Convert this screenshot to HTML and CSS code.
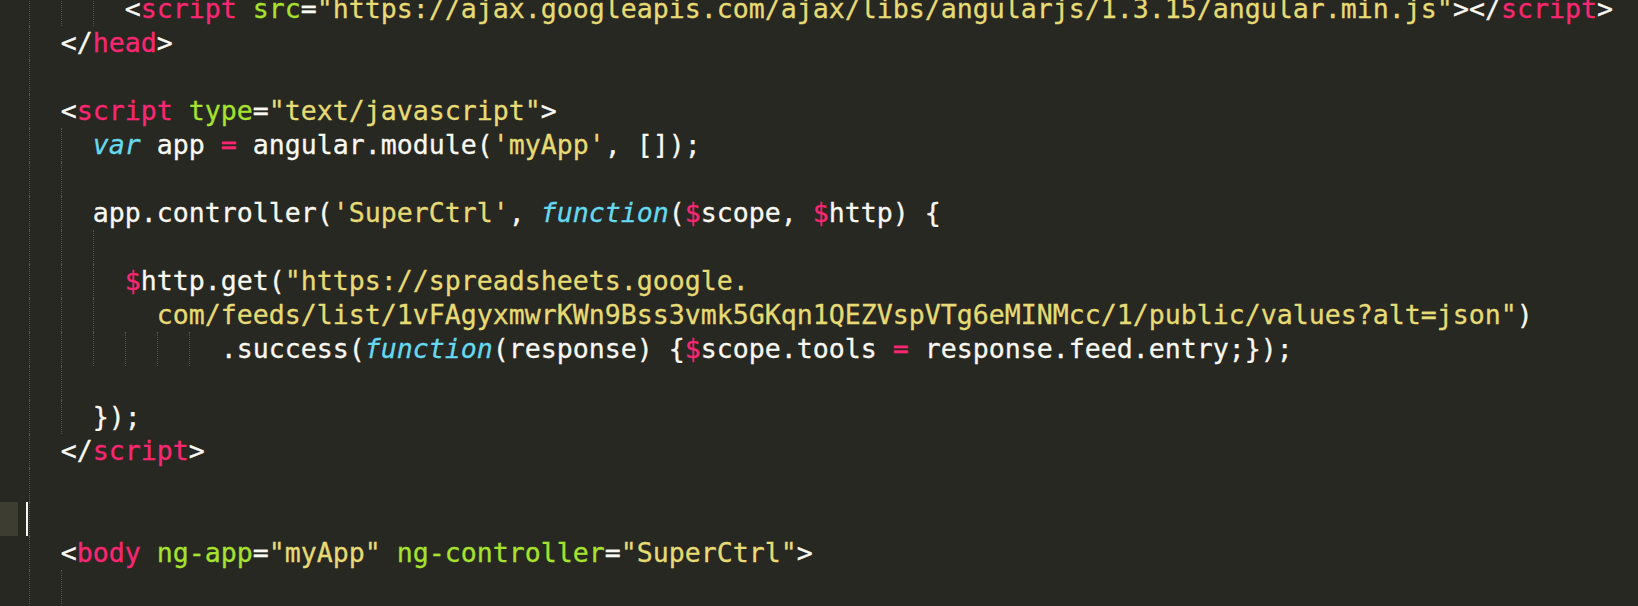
FILE: index.html
```html
<!DOCTYPE html>
<html>
  <head>
    <meta charset="utf-8" />
    <link rel="stylesheet" href="styles.css">
  </head>
  <body>
    <div class="editor">
      <div class="line"><span class="gutter"></span><span class="ind"></span><span class="ind"></span><span class="ind"></span><span class="code">&lt;<span class="tag">script</span> <span class="attr">src</span>=<span class="str">"https://ajax.googleapis.com/ajax/libs/angularjs/1.3.15/angular.min.js"</span>&gt;&lt;/<span class="tag">script</span>&gt;</span></div>
      <div class="line"><span class="gutter"></span><span class="ind"></span><span class="code">&lt;/<span class="tag">head</span>&gt;</span></div>
      <div class="line"><span class="gutter"></span><span class="ind"></span></div>
      <div class="line"><span class="gutter"></span><span class="ind"></span><span class="code">&lt;<span class="tag">script</span> <span class="attr">type</span>=<span class="str">"text/javascript"</span>&gt;</span></div>
      <div class="line"><span class="gutter"></span><span class="ind"></span><span class="ind"></span><span class="code"><span class="kw">var</span> app <span class="op">=</span> angular.module(<span class="str">'myApp'</span>, []);</span></div>
      <div class="line"><span class="gutter"></span><span class="ind"></span><span class="ind"></span></div>
      <div class="line"><span class="gutter"></span><span class="ind"></span><span class="ind"></span><span class="code">app.controller(<span class="str">'SuperCtrl'</span>, <span class="kw">function</span>(<span class="op">$</span>scope, <span class="op">$</span>http) {</span></div>
      <div class="line"><span class="gutter"></span><span class="ind"></span><span class="ind"></span><span class="ind"></span></div>
      <div class="line"><span class="gutter"></span><span class="ind"></span><span class="ind"></span><span class="ind"></span><span class="code"><span class="op">$</span>http.get(<span class="str">"https://spreadsheets.google.</span></span></div>
      <div class="line"><span class="gutter"></span><span class="ind"></span><span class="ind"></span><span class="ind"></span><span class="wrap"></span><span class="code"><span class="str">com/feeds/list/1vFAgyxmwrKWn9Bss3vmk5GKqn1QEZVspVTg6eMINMcc/1/public/values?alt=json"</span>)</span></div>
      <div class="line"><span class="gutter"></span><span class="ind"></span><span class="ind"></span><span class="ind"></span><span class="ind"></span><span class="ind"></span><span class="ind"></span><span class="code">.success(<span class="kw">function</span>(response) {<span class="op">$</span>scope.tools <span class="op">=</span> response.feed.entry;});</span></div>
      <div class="line"><span class="gutter"></span><span class="ind"></span><span class="ind"></span></div>
      <div class="line"><span class="gutter"></span><span class="ind"></span><span class="ind"></span><span class="code">});</span></div>
      <div class="line"><span class="gutter"></span><span class="ind"></span><span class="code">&lt;/<span class="tag">script</span>&gt;</span></div>
      <div class="line"><span class="gutter"></span><span class="ind"></span></div>
      <div class="line active"><span class="gutter"><span class="caret"></span></span><span class="ind"></span></div>
      <div class="line"><span class="gutter"></span><span class="ind"></span><span class="code">&lt;<span class="tag">body</span> <span class="attr">ng-app</span>=<span class="str">"myApp"</span> <span class="attr">ng-controller</span>=<span class="str">"SuperCtrl"</span>&gt;</span></div>
      <div class="line"><span class="gutter"></span><span class="ind"></span><span class="ind"></span></div>
    </div>
  </body>
</html>
```

FILE: styles.css
```css
html,
body {
  margin: 0;
  height: 100%;
  background: #272822;
  overflow: hidden;
}

.editor {
  margin-top: -8px;
  font-family: "DejaVu Sans Mono", monospace;
  font-size: 26.58px;
  color: #f8f8f2;
  -webkit-text-stroke: 0.3px currentColor;
}

.line {
  display: flex;
  height: 34px;
  line-height: 34px;
  white-space: pre;
}

.gutter {
  flex: none;
  display: flex;
  width: 28.7px;
}

.active .gutter {
  background: linear-gradient(to right, #3e3d32 18px, transparent 18px);
}

.caret {
  width: 2px;
  height: 34px;
  margin-left: 26px;
  background: #f8f8f0;
}

.ind {
  flex: none;
  box-sizing: border-box;
  width: 2ch;
  height: 34px;
  border-left: 1px dotted #56564d;
}

.wrap {
  flex: none;
  width: 2ch;
}

.code {
  flex: none;
}

/* monokai colours */
.tag,
.op {
  color: #f92672;
}

.attr {
  color: #a6e22e;
}

.str {
  color: #e6db74;
}

.kw {
  color: #66d9ef;
  font-style: italic;
}
```
